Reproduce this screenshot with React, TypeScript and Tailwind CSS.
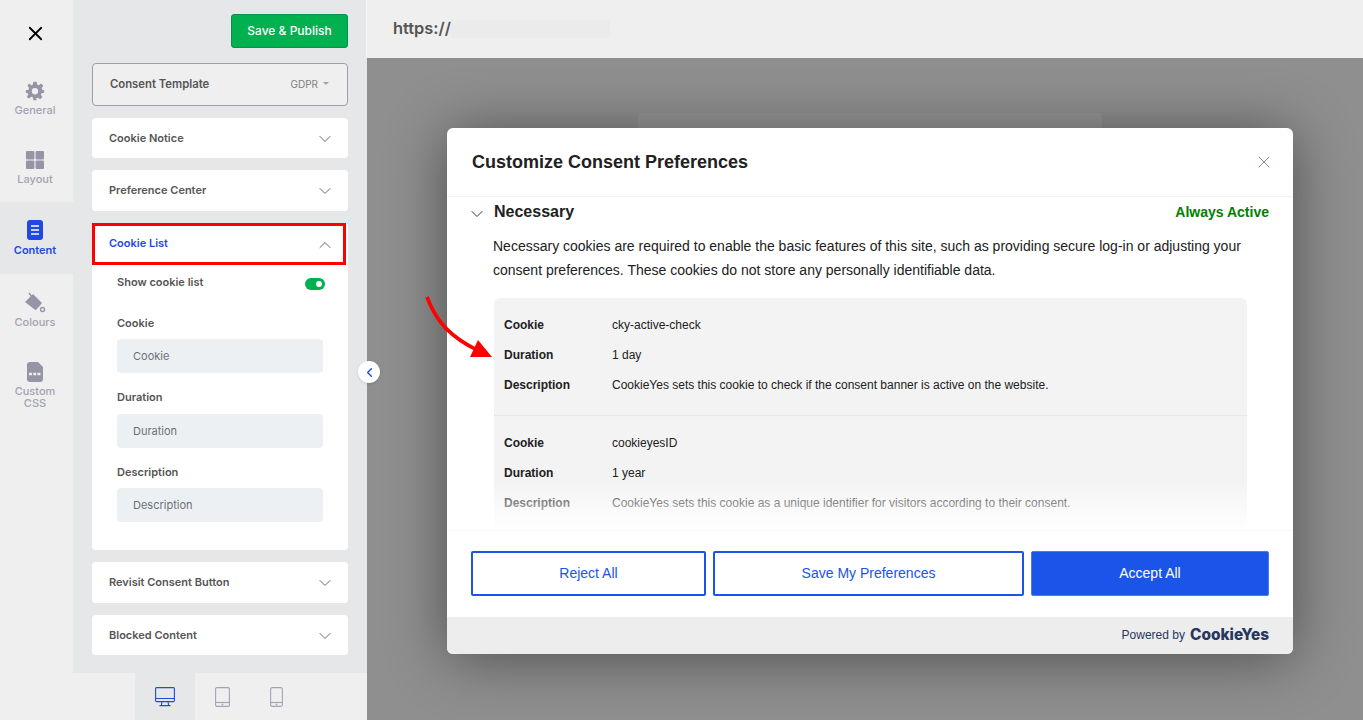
import React from 'react';
import { ChevronDown, ChevronUp, ChevronLeft, X } from 'lucide-react';

const sans = "font-['Inter',sans-serif]";
const arial = "font-['Liberation_Sans',Arial,sans-serif]";

const RailItem = ({ icon, label, active, className }: { icon: React.ReactNode; label: React.ReactNode; active?: boolean; className: string }) => (
  <div className={`flex flex-col items-center pr-[3px] ${className} ${active ? 'bg-[#e6e7e9] text-[#1f49e0]' : 'text-[#a3a3b2]'}`}>
    {icon}
    <span className={`text-[11px] leading-[12px] text-center font-medium ${active ? 'font-semibold' : ''}`}>{label}</span>
  </div>
);

const Section = ({ title, className }: { title: string; className: string }) => (
  <div className={`bg-white rounded-[4px] flex items-center justify-between pl-[17px] pr-[13px] ${className}`}>
    <span className="text-[11px] font-semibold text-[#555]">{title}</span>
    <ChevronDown size={20} strokeWidth={1.2} className="text-[#6a6a6a] mt-[1px]" />
  </div>
);

const Field = ({ label, className, inputClass }: { label: string; className: string; inputClass: string }) => (
  <div className={className}>
    <div className="text-[11px] font-semibold leading-[14px] text-[#555]">{label}</div>
    <div className={`h-[34px] w-[206px] rounded-[4px] bg-[#edf0f2] pl-[16px] flex items-center text-[11px] text-[#6b7078] ${inputClass}`}>{label}</div>
  </div>
);

const CookieRow = ({ label, value }: { label: string; value: string }) => (
  <div className="flex h-[30px] items-center text-[12px] text-[#212121]">
    <span className="w-[108px] font-bold">{label}</span>
    <span>{value}</span>
  </div>
);

const App: React.FC = () => {
  return (
    <div className={`flex h-[720px] w-[1363px] overflow-hidden ${sans}`}>
      {/* icon rail */}
      <div className="w-[73px] shrink-0 bg-[#efefef] flex flex-col">
        <div className="h-[67px] flex items-center justify-center pr-[3px]">
          <X size={23} strokeWidth={1.9} className="text-black" />
        </div>
        <RailItem
          className="h-[68px] pt-[14px]"
          label="General"
          icon={
            <svg width="20" height="20" viewBox="0 0 24 24" className="mb-[3px]">
              <path fill="#9595a6" fillRule="evenodd" d="M10 1h4l.6 3.2 1.9.8L19.2 3l2.8 2.8-2 2.7.8 1.9L23 11v3l-3.2.6-.8 1.9 2 2.7-2.8 2.8-2.7-2-1.9.8L13.9 23h-3.8l-.6-3.2-1.9-.8-2.7 2L2 19.2l2-2.7-.8-1.9L1 14v-3l3.2-.6.8-1.9-2-2.7L4.8 3l2.7 2 1.9-.8L10 1zm2 7.5a3.6 3.6 0 1 0 0 7.6 3.6 3.6 0 0 0 0-7.6z" />
            </svg>
          }
        />
        <RailItem
          className="h-[67px] pt-[15px]"
          label="Layout"
          icon={
            <svg width="20" height="20" viewBox="0 0 20 20" className="mb-[3px]" fill="#9595a6">
              <rect x="1" y="1" width="8.4" height="8.4" rx="1" />
              <rect x="10.6" y="1" width="8.4" height="8.4" rx="1" />
              <rect x="1" y="10.6" width="8.4" height="8.4" rx="1" />
              <rect x="10.6" y="10.6" width="8.4" height="8.4" rx="1" />
            </svg>
          }
        />
        <RailItem
          active
          className="h-[72px] pt-[18px]"
          label={<span className="relative top-[1px]">Content</span>}
          icon={
            <svg width="16" height="20" viewBox="0 0 16 20" className="mb-[3px]">
              <rect width="16" height="20" rx="3" fill="#1f49e0" />
              <path d="M4 6h8M4 10h8M4 14h8" stroke="#fff" strokeWidth="1.6" />
            </svg>
          }
        />
        <RailItem
          className="h-[84px] pt-[18px]"
          label="Colours"
          icon={
            <svg width="22" height="21" viewBox="0 0 22 21" className="mb-[3px]">
              <path fill="#9595a6" d="M1 10 9 2l9 9-5 6a2 2 0 0 1-3 0z" />
              <path fill="none" stroke="#9595a6" strokeWidth="1.4" d="M5 1l3 4" />
              <circle cx="18.5" cy="17.5" r="2" fill="none" stroke="#9595a6" strokeWidth="1.4" />
            </svg>
          }
        />
        <RailItem
          className="pt-[4px]"
          label={<>Custom<br />CSS</>}
          icon={
            <svg width="16" height="20" viewBox="0 0 16 20" className="mb-[3px]">
              <path fill="#9595a6" d="M3 0h8l5 5v12a3 3 0 0 1-3 3H3a3 3 0 0 1-3-3V3a3 3 0 0 1 3-3z" />
              <path stroke="#efefef" strokeWidth="2.4" strokeDasharray="3 1.2" d="M2 12h12" />
            </svg>
          }
        />
      </div>

      {/* settings panel */}
      <div className="relative w-[294px] shrink-0 bg-[#e6e7e9] flex flex-col">
        <div className="pl-[19px] pr-[19px] pt-[14px] flex-1">
          <div className="flex justify-end">
            <button className="h-[34px] w-[117px] rounded-[3px] bg-[#00b14f] border border-[#05924a] text-white text-[12px] font-medium">
              Save &amp; Publish
            </button>
          </div>
          <div className="mt-[15px] h-[43px] rounded-[4px] border border-[#9d9fae] bg-[#efefef] flex items-center justify-between pl-[17px] pr-[18px]">
            <span className="text-[11.3px] font-semibold text-[#555]">Consent Template</span>
            <span className="flex items-center gap-[5px] text-[10px] text-[#808080] mb-[1px]">
              GDPR
              <span className="mb-[2px] border-x-[3.5px] border-t-[3px] border-x-transparent border-t-[#a0a0ac]" />
            </span>
          </div>
          <Section title="Cookie Notice" className="mt-[12px] h-[40px]" />
          <Section title="Preference Center" className="mt-[12px] h-[41px]" />
          <div className="mt-[12px] h-[327px] bg-white rounded-[4px]">
            <div className="h-[42px] w-[254px] border-[3px] border-[#ff0000] flex items-center justify-between pl-[14px] pr-[8px]">
              <span className="text-[11px] font-semibold text-[#1f49e0] -mt-[1px]">Cookie List</span>
              <ChevronUp size={20} strokeWidth={1.2} className="text-[#6a6a6a] mt-[2px]" />
            </div>
            <div className="pl-[25px] pt-[10px]">
              <div className="flex items-center justify-between pr-[23px] h-[14px]">
                <span className="text-[11px] font-semibold text-[#555]">Show cookie list</span>
                <span className="mt-[3px] h-[12px] w-[20px] rounded-full bg-[#00b14f] flex items-center justify-end pr-[3px]">
                  <span className="h-[6px] w-[6px] rounded-full bg-white" />
                </span>
              </div>
              <Field label="Cookie" className="mt-[27px]" inputClass="mt-[9px]" />
              <Field label="Duration" className="mt-[17px]" inputClass="mt-[10px]" />
              <Field label="Description" className="mt-[17px]" inputClass="mt-[9px]" />
            </div>
          </div>
          <Section title="Revisit Consent Button" className="mt-[12px] h-[41px]" />
          <Section title="Blocked Content" className="mt-[12px] h-[40px]" />
        </div>
        {/* device switcher */}
        <div className="h-[47px] bg-[#efefef] flex">
          <div className="ml-[62px] w-[60px] bg-[#e6e7e9] flex items-center justify-center">
            <svg width="20" height="20" viewBox="0 0 20 20" fill="none" stroke="#1f49e0" strokeWidth="1.1">
              <rect x="0.6" y="0.6" width="18.8" height="14" rx="1" />
              <path d="M0.6 11.5h18.8M7 14.6l-.6 3.6M13 14.6l.6 3.6M4.5 18.6h11" />
            </svg>
          </div>
          <div className="w-[55px] flex items-center justify-center">
            <svg width="15" height="20" viewBox="0 0 15 20" fill="none" stroke="#a3a3b2" strokeWidth="1.1">
              <rect x="0.6" y="0.6" width="13.8" height="18.8" rx="1.4" />
              <path d="M0.6 15.5h13.8" />
              <circle cx="7.5" cy="17.4" r="0.4" />
            </svg>
          </div>
          <div className="w-[53px] flex items-center justify-center">
            <svg width="13" height="20" viewBox="0 0 13 20" fill="none" stroke="#a3a3b2" strokeWidth="1.1">
              <rect x="0.6" y="0.6" width="11.8" height="18.8" rx="1.6" />
              <path d="M0.6 15.5h11.8" />
              <circle cx="6.5" cy="17.4" r="0.4" />
            </svg>
          </div>
        </div>
        <div className="absolute right-0 top-0 h-[57px] w-[1px] bg-[#f4f4f4]" />
        <button className="absolute left-[285px] top-[361px] z-10 h-[22px] w-[22px] rounded-full bg-white shadow flex items-center justify-center">
          <ChevronLeft size={15} strokeWidth={2.2} className="text-[#1f49e0]" />
        </button>
      </div>

      {/* preview */}
      <div className="flex-1 flex flex-col min-w-0">
        <div className="h-[58px] shrink-0 bg-[#efefef] flex items-center pl-[26px] text-[16.4px] font-semibold text-[#555]">
          <span className="-mt-[1px]">https://</span>
          <span className="h-[18px] flex-none w-[159px] bg-[#ebebeb]" />
        </div>
        <div className={`relative flex-1 bg-[#8f8f8f] pl-[80px] pt-[70px] ${arial}`}>
          <div className="absolute left-[271px] top-[55px] h-[30px] w-[464px] rounded-[4px] bg-[#969696]" />

          <div className="relative w-[846px] h-[526px] bg-white rounded-[6px] overflow-hidden shadow-[0_4px_60px_rgba(0,0,0,0.45)] flex flex-col">
            <div className="h-[69px] shrink-0 border-b border-[#f3f3f3] flex items-center justify-between pl-[25px] pr-[19px]">
              <span className="text-[18px] font-bold text-[#212121]">Customize Consent Preferences</span>
              <X size={20} strokeWidth={1} className="text-[#6a7694]" />
            </div>

            <div className="h-[334px] shrink-0 relative overflow-hidden border-b border-[#f8f8f8] pr-[24px]">
              <div className="flex items-center justify-between pl-[20px] h-[30px]">
                <div className="flex items-center">
                  <ChevronDown size={20} strokeWidth={1.1} className="text-[#212121] mt-[3px]" />
                  <span className="ml-[7px] text-[16px] font-bold leading-[30px] text-[#212121] -mt-[1px]">Necessary</span>
                </div>
                <span className="text-[14px] font-bold text-[#008000]">Always Active</span>
              </div>
              <p className="ml-[46px] mt-[7px] text-[14px] leading-[24px] text-[#212121]">
                Necessary cookies are required to enable the basic features of this site, such as providing secure log-in or adjusting your consent preferences. These cookies do not store any personally identifiable data.
              </p>
              <div className="ml-[47px] mr-[22px] mt-[16px] rounded-[6px] bg-[#f3f3f3] h-[240px]">
                <div className="pl-[10px] pt-[12px] pb-[15px] border-b border-[#e9e9e9]">
                  <CookieRow label="Cookie" value="cky-active-check" />
                  <CookieRow label="Duration" value="1 day" />
                  <CookieRow label="Description" value="CookieYes sets this cookie to check if the consent banner is active on the website." />
                </div>
                <div className="pl-[10px] pt-[12px]">
                  <CookieRow label="Cookie" value="cookieyesID" />
                  <CookieRow label="Duration" value="1 year" />
                  <CookieRow label="Description" value="CookieYes sets this cookie as a unique identifier for visitors according to their consent." />
                </div>
              </div>
              <div className="absolute inset-x-0 bottom-0 h-[50px] bg-gradient-to-b from-white/0 to-white" />
            </div>

            <div className="flex-1 flex px-[24px] pt-[20px] gap-[7px]">
              <button className="h-[45px] w-[235px] rounded-[2px] border-2 border-[#1a54e8] text-[14px] text-[#1a54e8]">Reject All</button>
              <button className="h-[45px] w-[311px] rounded-[2px] border-2 border-[#1a54e8] text-[14px] text-[#1a54e8]">Save My Preferences</button>
              <button className="h-[45px] w-[238px] rounded-[2px] bg-[#1a54e8] border border-[#4a7cf0] text-[14px] text-white">Accept All</button>
            </div>

            <div className="h-[37px] shrink-0 bg-[#ededed] flex items-center justify-end pr-[24px] pb-[1px] text-[12px] text-[#27375f]">
              <span>Powered by</span>
              <span className={`ml-[5px] text-[15.4px] font-extrabold ${sans}`}>CookieYes</span>
            </div>
          </div>

          {/* annotation arrow */}
          <svg className="absolute left-[50px] top-[230px]" width="90" height="80" viewBox="0 0 90 80" fill="none">
            <path d="M10 9C20 36 36 50 60 62" stroke="#ff0000" strokeWidth="3.6" />
            <path d="M75 69H53L61 52z" fill="#ff0000" />
          </svg>
        </div>
      </div>
    </div>
  );
};

export default App;
